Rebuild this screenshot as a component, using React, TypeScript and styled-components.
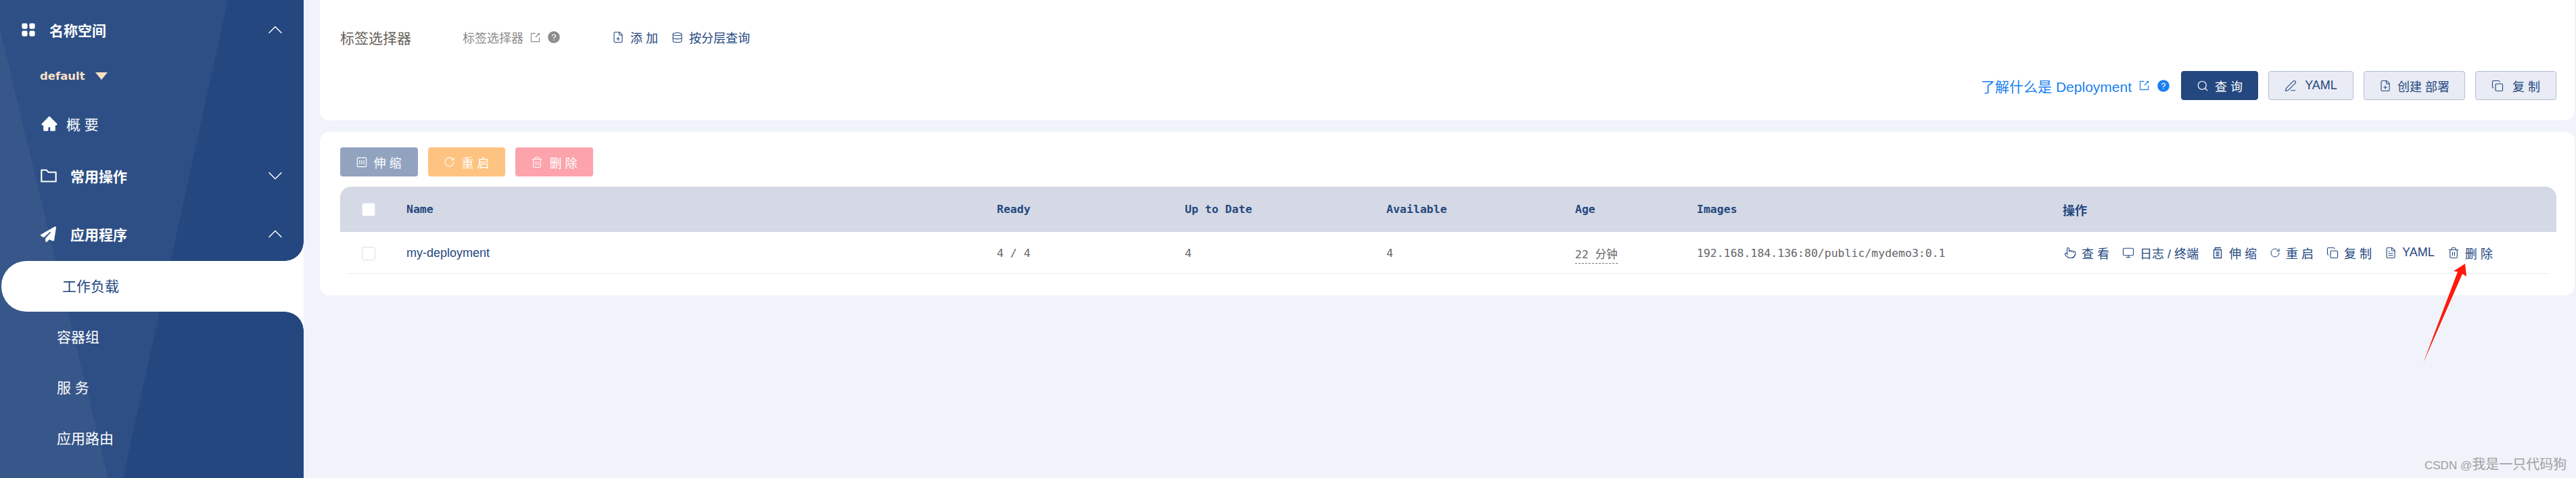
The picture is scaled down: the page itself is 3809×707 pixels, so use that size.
import React from "react";
import styled, { createGlobalStyle } from "styled-components";
import {
  AiFillHome,
  AiFillQuestionCircle,
  AiOutlineExport,
  AiOutlineFolder,
} from "react-icons/ai";
import { BsGridFill } from "react-icons/bs";
import { FaPaperPlane } from "react-icons/fa6";
import {
  ChevronDown,
  ChevronUp,
  Copy,
  Database,
  FilePlus,
  FileText,
  Monitor,
  PenLine,
  Pointer,
  RotateCw,
  Search,
  Trash2,
} from "lucide-react";

const NAVY = "#24477f";
const SANS = `"Liberation Sans", "Noto Sans CJK SC", sans-serif`;
const MONO = `"DejaVu Sans Mono", "Noto Sans CJK SC", monospace`;

const GlobalStyle = createGlobalStyle`
  html, body {
    margin: 0;
    padding: 0;
    height: 100%;
    overflow: hidden;
    background: #f0f3fa;
    font-family: ${SANS};
  }
`;

const Page = styled.div`
  position: relative;
  display: flex;
  width: 3809px;
  height: 707px;
  overflow: hidden;
  background: #f0f3fa;
`;

const Sidebar = styled.aside`
  position: relative;
  flex: 0 0 449px;
  height: 707px;
  box-sizing: border-box;
  background: ${NAVY};
  color: #fff;
  overflow: hidden;

  &::before {
    content: "";
    position: absolute;
    inset: 0;
    background: #2d4f85;
    clip-path: polygon(0 0, 337px 0, 182px 707px, 0 707px);
  }
  &::after {
    content: "";
    position: absolute;
    inset: 0;
    background: #375689;
    clip-path: polygon(0 43px, 160px 707px, 0 707px);
  }
`;

const Nav = styled.nav`
  position: relative;
  z-index: 1;
`;

const GroupRow = styled.div<{ $h: number; $indent: number; $gap: number; $top?: number }>`
  display: flex;
  align-items: center;
  gap: ${(p) => p.$gap}px;
  height: ${(p) => p.$h}px;
  margin-top: ${(p) => p.$top ?? 0}px;
  padding: 0 24px 0 ${(p) => p.$indent}px;
  font-size: 21px;
  font-weight: 700;
  & > svg:first-child {
    flex: none;
  }
`;

const Chevron = styled.span`
  margin-left: auto;
  display: flex;
`;

const Namespace = styled.div`
  display: flex;
  align-items: center;
  gap: 15px;
  height: 48px;
  padding-left: 59px;
  color: #fbe1c6;
  font-size: 16.5px;
  font-weight: 700;
  font-family: "DejaVu Sans", sans-serif;
`;

const Caret = styled.span`
  width: 0;
  height: 0;
  border-left: 9px solid transparent;
  border-right: 9px solid transparent;
  border-top: 11px solid #fbe1c6;
`;

const PlainRow = styled.div`
  display: flex;
  align-items: center;
  gap: 12px;
  height: 94px;
  padding-left: 60px;
  font-size: 21px;
`;

const SubItem = styled.div<{ $active?: boolean }>`
  position: relative;
  display: flex;
  align-items: center;
  height: 75px;
  box-sizing: border-box;
  padding-bottom: 3px;
  padding-left: ${(p) => (p.$active ? 92 : 84)}px;
  font-size: 21px;
  ${(p) =>
    p.$active &&
    `
    margin-left: 2px;
    padding-left: 90px;
    background: #fff;
    color: ${NAVY};
    border-radius: 37px 0 0 37px;
    &::before, &::after {
      content: "";
      position: absolute;
      right: 0;
      width: 28px;
      height: 28px;
    }
    &::before {
      top: -28px;
      background: radial-gradient(circle at 0 0, transparent 27.5px, #fff 28px);
    }
    &::after {
      bottom: -28px;
      background: radial-gradient(circle at 0 100%, transparent 27.5px, #fff 28px);
    }
  `}
`;

const Main = styled.main`
  flex: 1;
  min-width: 0;
  padding-left: 24px;
  padding-right: 2px;
  display: flex;
  flex-direction: column;
  gap: 17px;
`;

const Card = styled.section`
  background: #fff;
  border-radius: 0 0 14px 14px;
`;

const FilterCard = styled(Card)`
  height: 178px;
  padding: 0 27px 0 30px;
  box-sizing: border-box;
`;

const FilterRow = styled.div`
  display: flex;
  align-items: center;
  height: 110px;
`;

const FilterTitle = styled.span`
  width: 181px;
  font-size: 21px;
  color: #665f58;
`;

const FilterLabel = styled.span`
  display: flex;
  align-items: center;
  gap: 9px;
  width: 221px;
  font-size: 18px;
  color: #8c8c8c;
`;

const GhostLink = styled.a`
  display: flex;
  align-items: center;
  gap: 9px;
  margin-right: 20px;
  font-size: 18px;
  color: ${NAVY};
`;

const ToolRow = styled.div`
  display: flex;
  justify-content: flex-end;
  align-items: center;
  gap: 15px;
  margin-top: -5px;
`;

const LearnLink = styled.a`
  display: flex;
  align-items: center;
  gap: 10px;
  margin-right: 1px;
  font-size: 21px;
  color: #1a7ff0;
`;

const Button = styled.button<{ $primary?: boolean; $w: number; $gap?: number }>`
  display: flex;
  align-items: center;
  justify-content: center;
  gap: ${(p) => p.$gap ?? 9}px;
  width: ${(p) => p.$w}px;
  height: 43px;
  padding: 0;
  box-sizing: border-box;
  border-radius: 4px;
  font-family: ${SANS};
  font-size: 18px;
  color: ${(p) => (p.$primary ? "#fff" : NAVY)};
  background: ${(p) => (p.$primary ? NAVY : "#e9ecf4")};
  border: 1px solid ${(p) => (p.$primary ? NAVY : "#b3bdd2")};
`;

const ListCard = styled(Card)`
  height: 242px;
  padding: 23px 27px 0 30px;
  box-sizing: border-box;
  border-radius: 14px;
`;

const BatchRow = styled.div`
  display: flex;
  gap: 15px;
  margin-bottom: 15px;
`;

const BatchButton = styled.button<{ $bg: string; $w: number }>`
  display: flex;
  align-items: center;
  justify-content: center;
  gap: 9px;
  width: ${(p) => p.$w}px;
  height: 43px;
  padding: 0;
  border: none;
  border-radius: 4px;
  background: ${(p) => p.$bg};
  color: #fff;
  font-family: ${SANS};
  font-size: 18px;
`;

const COLUMNS = "98px 873px 278px 298px 279px 180px 541px 1fr";

const HeadRow = styled.div`
  display: grid;
  grid-template-columns: ${COLUMNS};
  align-items: center;
  height: 67px;
  background: #d4d9e5;
  border-radius: 16px 16px 0 0;
  color: ${NAVY};
  font-family: ${MONO};
  font-size: 16.5px;
  font-weight: 700;
`;

const Row = styled.div`
  display: grid;
  grid-template-columns: ${COLUMNS};
  align-items: center;
  height: 61px;
  margin-top: 1px;
  color: #666;
  font-family: ${MONO};
  font-size: 16.5px;
  position: relative;

  &::after {
    content: "";
    position: absolute;
    left: 10px;
    right: 11px;
    bottom: 0;
    height: 1px;
    background: #ebedf0;
  }
`;

const CheckCell = styled.div`
  padding-left: 32px;
`;

const Check = styled.span<{ $border: string }>`
  display: block;
  width: 20px;
  height: 20px;
  box-sizing: border-box;
  background: #fff;
  border: 1px solid ${(p) => p.$border};
  border-radius: 3px;
`;

const NameCell = styled.div`
  color: ${NAVY};
  font-family: ${SANS};
  font-size: 18px;
`;

const AgeText = styled.span`
  border-bottom: 1px dashed #777;
  padding-bottom: 3px;
  font-size: 16.5px;
`;

const HeadAction = styled.span`
  font-size: 18px;
`;

const Actions = styled.div`
  display: flex;
  align-items: center;
  gap: 19px;
  margin-left: 2px;
  padding-bottom: 2px;
`;

const Action = styled.a`
  display: flex;
  align-items: center;
  gap: 8px;
  color: ${NAVY};
  font-family: ${SANS};
  font-size: 18px;
  white-space: nowrap;
`;

const Arrow = styled.svg`
  position: absolute;
  left: 3570px;
  top: 380px;
`;

const Watermark = styled.span`
  position: absolute;
  left: 3585px;
  top: 675px;
  color: #a0a0a0;
  font-size: 20px;
  line-height: 24px;
  white-space: nowrap;
`;

const WatermarkLatin = styled.span`
  font-size: 17px;
`;

const ScaleIcon = ({ size = 18, tall = false }: { size?: number; tall?: boolean }) => (
  <svg width={size} height={size} viewBox="0 0 18 18" fill="none" stroke="currentColor" strokeWidth="1.3">
    {tall ? (
      <>
        <path d="M14 1.5H5.5v3M3.5 4.5h11v12h-11z" />
        <path d="M6.5 8h5M6.5 10.5h5M6.5 13h5" />
      </>
    ) : (
      <>
        <rect x="1.5" y="1.5" width="15" height="15" rx="1.5" />
        <path d="M5.5 5.5v7M9 5.5v7M12.5 5.5v7" />
      </>
    )}
  </svg>
);

const thin = { strokeWidth: 1.5 };

export default function App() {
  return (
    <Page>
      <GlobalStyle />
      <Sidebar>
        <Nav>
          <GroupRow $h={88} $indent={31} $gap={20}>
            <BsGridFill size={22} />
            名称空间
            <Chevron>
              <ChevronUp size={36} strokeWidth={1} />
            </Chevron>
          </GroupRow>
          <Namespace>
            default
            <Caret />
          </Namespace>
          <PlainRow>
            <AiFillHome size={26} />概 要
          </PlainRow>
          <GroupRow $h={60} $indent={57} $gap={17}>
            <AiOutlineFolder size={30} />
            常用操作
            <Chevron>
              <ChevronDown size={36} strokeWidth={1} />
            </Chevron>
          </GroupRow>
          <GroupRow $h={80} $top={16} $indent={60} $gap={21}>
            <FaPaperPlane size={23} />
            应用程序
            <Chevron>
              <ChevronUp size={36} strokeWidth={1} />
            </Chevron>
          </GroupRow>
          <SubItem $active>工作负载</SubItem>
          <SubItem>容器组</SubItem>
          <SubItem>服 务</SubItem>
          <SubItem>应用路由</SubItem>
        </Nav>
      </Sidebar>
      <Main>
        <FilterCard>
          <FilterRow>
            <FilterTitle>标签选择器</FilterTitle>
            <FilterLabel>
              标签选择器
              <AiOutlineExport size={17} />
              <AiFillQuestionCircle size={20} />
            </FilterLabel>
            <GhostLink>
              <FilePlus size={18} {...thin} />添 加
            </GhostLink>
            <GhostLink>
              <Database size={17} {...thin} />
              按分层查询
            </GhostLink>
          </FilterRow>
          <ToolRow>
            <LearnLink>
              了解什么是 Deployment
              <AiOutlineExport size={17} />
              <AiFillQuestionCircle size={20} />
            </LearnLink>
            <Button $primary $w={114}>
              <Search size={18} {...thin} />查 询
            </Button>
            <Button $w={126} $gap={12}>
              <PenLine size={18} {...thin} />
              YAML
            </Button>
            <Button $w={150}>
              <FilePlus size={18} {...thin} />创建 部署
            </Button>
            <Button $w={120} $gap={13}>
              <Copy size={18} {...thin} />复 制
            </Button>
          </ToolRow>
        </FilterCard>
        <ListCard>
          <BatchRow>
            <BatchButton $bg="#92a3c0" $w={115}>
              <ScaleIcon size={16} />伸 缩
            </BatchButton>
            <BatchButton $bg="#fec381" $w={114}>
              <RotateCw size={17} {...thin} />重 启
            </BatchButton>
            <BatchButton $bg="#fca3ac" $w={115}>
              <Trash2 size={18} {...thin} />删 除
            </BatchButton>
          </BatchRow>
          <HeadRow>
            <CheckCell>
              <Check $border="#e3e6ee" />
            </CheckCell>
            <span>Name</span>
            <span>Ready</span>
            <span>Up to Date</span>
            <span>Available</span>
            <span>Age</span>
            <span>Images</span>
            <HeadAction>操作</HeadAction>
          </HeadRow>
          <Row>
            <CheckCell>
              <Check $border="#dcdfe6" />
            </CheckCell>
            <NameCell>my-deployment</NameCell>
            <span>4 / 4</span>
            <span>4</span>
            <span>4</span>
            <span>
              <AgeText>22 分钟</AgeText>
            </span>
            <span>192.168.184.136:80/public/mydemo3:0.1</span>
            <Actions>
              <Action>
                <Pointer size={18} {...thin} />查 看
              </Action>
              <Action>
                <Monitor size={18} {...thin} />日志 / 终端
              </Action>
              <Action>
                <ScaleIcon size={18} tall />伸 缩
              </Action>
              <Action>
                <RotateCw size={16} {...thin} />重 启
              </Action>
              <Action>
                <Copy size={18} {...thin} />复 制
              </Action>
              <Action>
                <FileText size={18} {...thin} />
                YAML
              </Action>
              <Action>
                <Trash2 size={18} {...thin} />删 除
              </Action>
            </Actions>
          </Row>
        </ListCard>
      </Main>
      <Arrow width="90" height="165" viewBox="0 0 90 165">
        <path d="M13 157 L64 22 L58 21 L75 10 L77 29 L71 25 Z" fill="#ff1a0a" />
      </Arrow>
      <Watermark>
        <WatermarkLatin>CSDN @</WatermarkLatin>我是一只代码狗
      </Watermark>
    </Page>
  );
}
